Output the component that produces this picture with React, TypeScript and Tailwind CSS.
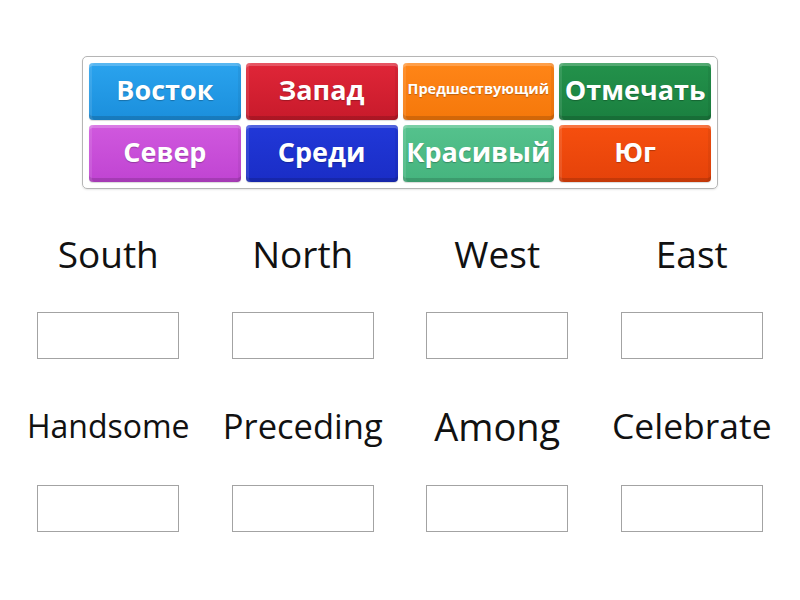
const tiles = [
  { text: "Восток", bg: "bg-gradient-to-b from-[#2aa3ee] to-[#1b8fdc]", size: "text-[27px]" },
  { text: "Запад", bg: "bg-gradient-to-b from-[#e02638] to-[#c81a2b]", size: "text-[27px]" },
  { text: "Предшествующий", bg: "bg-gradient-to-b from-[#ff8517] to-[#f5780a]", size: "text-[14.5px]" },
  { text: "Отмечать", bg: "bg-gradient-to-b from-[#23924b] to-[#1b8040]", size: "text-[27px]" },
  { text: "Север", bg: "bg-gradient-to-b from-[#d058de] to-[#c044d2]", size: "text-[27px]" },
  { text: "Среди", bg: "bg-gradient-to-b from-[#2138d8] to-[#1a2dc6]", size: "text-[27px]" },
  { text: "Красивый", bg: "bg-gradient-to-b from-[#55c28d] to-[#45b47e]", size: "text-[27px]" },
  { text: "Юг", bg: "bg-gradient-to-b from-[#f64f0e] to-[#e5420a]", size: "text-[27px]" },
];

const targets = [
  { word: "South", size: "text-[37px]" },
  { word: "North", size: "text-[37px]" },
  { word: "West", size: "text-[37px]" },
  { word: "East", size: "text-[37px]" },
  { word: "Handsome", size: "text-[32px]" },
  { word: "Preceding", size: "text-[34.5px]" },
  { word: "Among", size: "text-[38px]" },
  { word: "Celebrate", size: "text-[35.5px]" },
];

function Tile({ text, bg, size }: { text: string; bg: string; size: string }) {
  return (
    <div
      className={`${bg} ${size} h-[57px] pb-[4px] rounded-[4px] flex items-center justify-center font-bold text-white whitespace-nowrap leading-none shadow-[inset_0_3px_0_rgba(255,255,255,0.22),inset_3px_0_0_rgba(255,255,255,0.1),inset_-3px_0_0_rgba(0,0,0,0.05),inset_0_-4px_0_rgba(0,0,0,0.14),0_1px_1px_rgba(0,0,0,0.15)]`}
      style={{ textShadow: "0 1px 1px rgba(0,0,0,0.25)" }}
    >
      {text}
    </div>
  );
}

export default function App() {
  return (
    <div className="w-[800px] h-[600px] bg-white font-['Open_Sans',sans-serif] pt-[56px]">
      <div className="mx-auto w-[636px] border border-[#b5b5b5] rounded-[5px] p-[6px] grid grid-cols-4 gap-[5px] shadow-[0_1px_2px_rgba(0,0,0,0.1)]">
        {tiles.map((t) => (
          <Tile key={t.text} {...t} />
        ))}
      </div>
      <div className="mt-[38px] px-[11px] grid grid-cols-4 gap-y-[41px]">
        {targets.map((t) => (
          <div key={t.word} className="flex flex-col items-center">
            <div className={`h-[56px] pb-[4px] flex items-center justify-center leading-none text-[#111] ${t.size}`}>
              {t.word}
            </div>
            <div className="mt-[29px] w-[142px] h-[47px] border border-[#a3a3a3] bg-white" />
          </div>
        ))}
      </div>
    </div>
  );
}
